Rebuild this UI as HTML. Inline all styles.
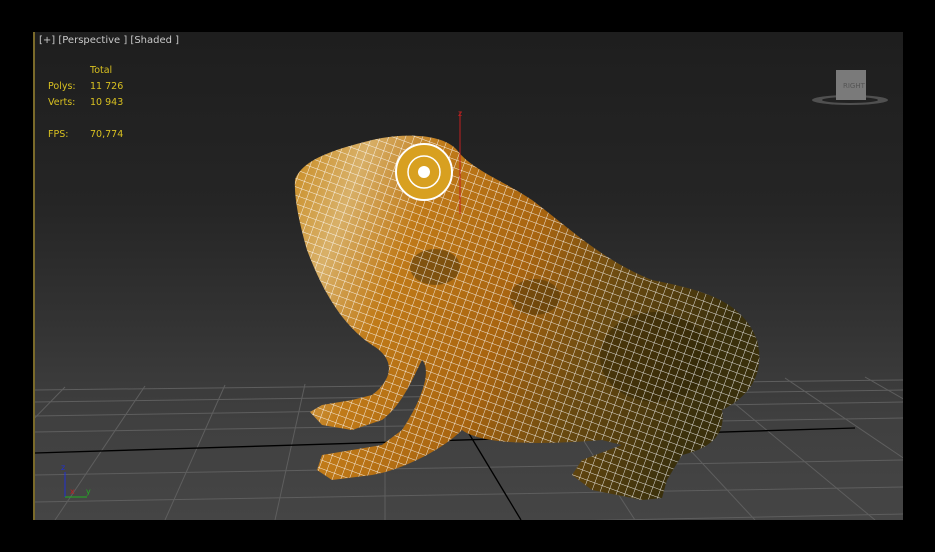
<!DOCTYPE html>
<html><head><style>
body{margin:0;background:#000;width:935px;height:552px;overflow:hidden;font-family:"DejaVu Sans","Liberation Sans",sans-serif}
.vp{position:absolute;left:33px;top:32px;width:870px;height:488px;overflow:hidden;background:linear-gradient(#1e1e1e 0%,#252525 35%,#333 60%,#404040 80%,#454545 100%);border-left:2px solid #7a6a2a;box-sizing:border-box}
.t{position:absolute;font-size:10px;color:#c8c8c8}
.y{position:absolute;font-size:9.5px;color:#d8c020}
</style></head><body>
<div class="vp">
<svg width="870" height="488" style="position:absolute;left:0;top:0">
<defs>
<linearGradient id="fg" x1="0" y1="0" x2="1" y2="0.3">
<stop offset="0" stop-color="#c88a20"/><stop offset="0.15" stop-color="#d8b068"/><stop offset="0.3" stop-color="#c07a18"/><stop offset="0.55" stop-color="#a86410"/><stop offset="0.75" stop-color="#6a4a10"/><stop offset="1" stop-color="#3a300c"/></linearGradient>
<pattern id="wf" width="8" height="8" patternUnits="userSpaceOnUse" patternTransform="rotate(20)">
<path d="M0 0H8M0 0V8" stroke="#fff" stroke-width="1" fill="none"/></pattern>
<clipPath id="fc"><path id="frog" transform="translate(-33,-32)" d="M293 180 C300 160 330 150 370 140 C400 133 440 133 455 150 C470 170 500 180 530 200 C570 230 600 260 650 280 C700 290 740 300 755 340 C765 380 740 400 720 410 C725 440 700 450 680 455 L665 480 L660 498 L640 500 L590 490 L570 475 L580 460 L620 445 L600 440 C540 445 480 445 460 430 C440 450 400 470 370 475 L330 480 L315 470 L320 455 L350 450 L380 445 L400 430 C420 400 430 370 420 360 C410 380 400 405 380 420 L350 430 L320 425 L308 412 L320 405 L350 400 L370 395 C390 380 395 360 370 345 C340 325 320 290 305 250 C298 225 292 200 293 180 Z"/></clipPath>
</defs>
<g stroke="#5e5e5e" stroke-width="1">
<line x1="0" y1="358" x2="870" y2="348"/><line x1="0" y1="370" x2="870" y2="358"/><line x1="0" y1="384" x2="870" y2="370"/><line x1="0" y1="400" x2="870" y2="386"/><line x1="0" y1="443" x2="870" y2="428"/><line x1="0" y1="470" x2="870" y2="455"/><line x1="0" y1="500" x2="870" y2="482"/>
<line x1="30" y1="355" x2="-100" y2="488"/><line x1="110" y1="354" x2="20" y2="488"/><line x1="190" y1="353" x2="130" y2="488"/><line x1="270" y1="352" x2="240" y2="488"/><line x1="350" y1="351" x2="350" y2="488"/><line x1="510" y1="349" x2="600" y2="488"/><line x1="590" y1="348" x2="720" y2="488"/><line x1="670" y1="347" x2="840" y2="488"/><line x1="750" y1="346" x2="960" y2="488"/><line x1="830" y1="345" x2="1080" y2="488"/>
</g>
<line x1="0" y1="421" x2="820" y2="396" stroke="#000" stroke-width="1.3"/>
<line x1="430" y1="395" x2="486" y2="488" stroke="#000" stroke-width="1.3"/>
<use href="#frog" fill="url(#fg)"/>
<g clip-path="url(#fc)">
<ellipse cx="400" cy="235" rx="25" ry="18" fill="#3a2a08" opacity="0.45"/>
<ellipse cx="500" cy="265" rx="25" ry="18" fill="#3a2a08" opacity="0.4"/>
<ellipse cx="620" cy="325" rx="55" ry="45" fill="#2a2205" opacity="0.45"/>
<rect x="250" y="90" width="500" height="420" fill="url(#wf)" opacity="0.85"/>
</g>
<circle cx="389" cy="140" r="28" fill="#d8a020" stroke="#fff" stroke-width="2"/>
<circle cx="389" cy="140" r="16" fill="none" stroke="#fff" stroke-width="1.5"/>
<circle cx="389" cy="140" r="6" fill="#fff"/>
<line x1="425" y1="182" x2="425" y2="80" stroke="#c02020"/>
<text x="423" y="84" font-size="8" fill="#c02020">z</text>
<line x1="30" y1="465" x2="30" y2="440" stroke="#2030d0"/>
<line x1="30" y1="465" x2="52" y2="465" stroke="#20b020"/>
<text x="26" y="438" font-size="8" fill="#2030d0">z</text>
<text x="35" y="462" font-size="8" fill="#c02020">x</text>
<text x="51" y="462" font-size="8" fill="#20b020">y</text>
<ellipse cx="815" cy="68" rx="38" ry="5" fill="#555" opacity="0.9"/>
<ellipse cx="815" cy="68" rx="28" ry="3" fill="#222"/>
<rect x="801" y="38" width="30" height="30" fill="#7a7a7a"/>
<text x="808" y="56" font-size="7" fill="#555">RIGHT</text>
</svg>
<div class="t" style="left:4px;top:3px">[+] [Perspective ] [Shaded ]</div>
<div class="y" style="left:55px;top:33px">Total</div>
<div class="y" style="left:13px;top:49px">Polys:</div><div class="y" style="left:55px;top:49px">11 726</div>
<div class="y" style="left:13px;top:65px">Verts:</div><div class="y" style="left:55px;top:65px">10 943</div>
<div class="y" style="left:13px;top:97px">FPS:</div><div class="y" style="left:55px;top:97px">70,774</div>
</div>
</body></html>
